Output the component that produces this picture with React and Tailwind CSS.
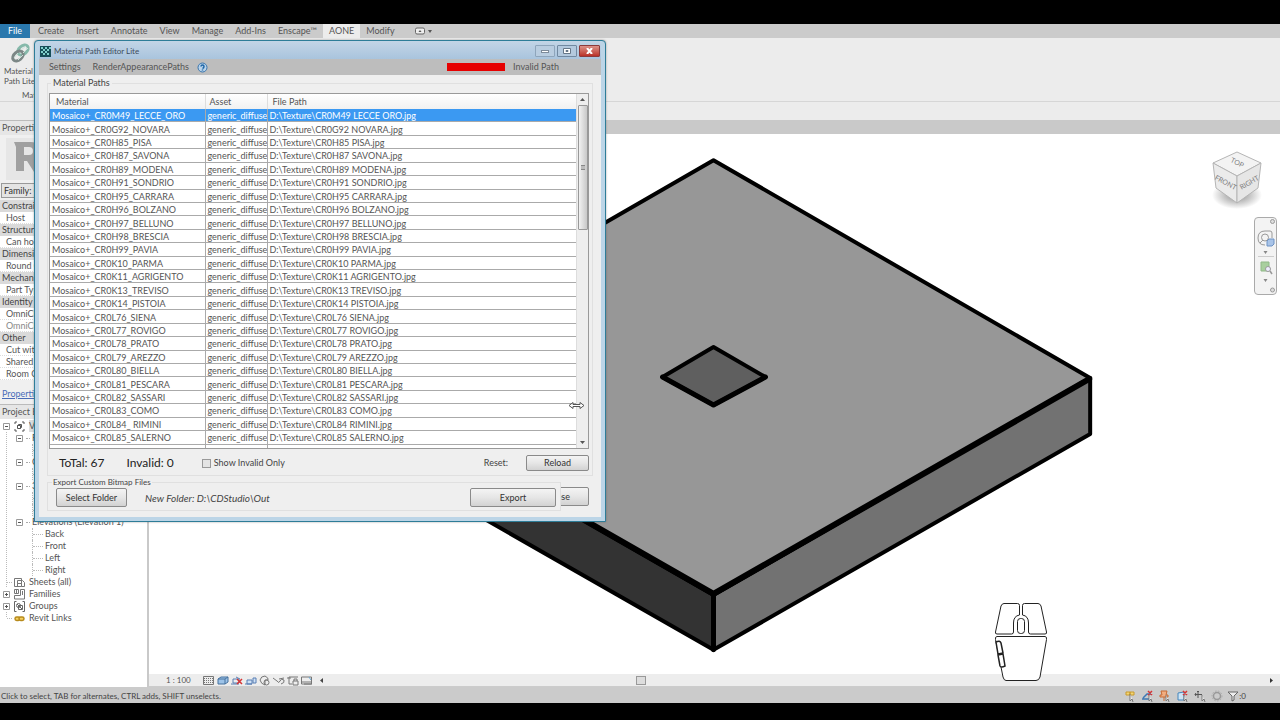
import { ChevronDown } from "lucide-react";

const TABS = ["Create", "Insert", "Annotate", "View", "Manage", "Add-Ins", "Enscape™", "AONE", "Modify"];

const MATERIALS = [
  "CR0M49_LECCE_ORO",
  "CR0G92_NOVARA",
  "CR0H85_PISA",
  "CR0H87_SAVONA",
  "CR0H89_MODENA",
  "CR0H91_SONDRIO",
  "CR0H95_CARRARA",
  "CR0H96_BOLZANO",
  "CR0H97_BELLUNO",
  "CR0H98_BRESCIA",
  "CR0H99_PAVIA",
  "CR0K10_PARMA",
  "CR0K11_AGRIGENTO",
  "CR0K13_TREVISO",
  "CR0K14_PISTOIA",
  "CR0L76_SIENA",
  "CR0L77_ROVIGO",
  "CR0L78_PRATO",
  "CR0L79_AREZZO",
  "CR0L80_BIELLA",
  "CR0L81_PESCARA",
  "CR0L82_SASSARI",
  "CR0L83_COMO",
  "CR0L84_ RIMINI",
  "CR0L85_SALERNO",
  "CR0M44_BOLZANO_ORO",
];

const PROPERTIES = [
  { name: "Constraints", header: true },
  { name: "Host" },
  { name: "Structural", header: true },
  { name: "Can host rebar" },
  { name: "Dimensions", header: true },
  { name: "Round Connector" },
  { name: "Mechanical", header: true },
  { name: "Part Type" },
  { name: "Identity Data", header: true },
  { name: "OmniClass Number" },
  { name: "OmniClass Title", dim: true },
  { name: "Other", header: true },
  { name: "Cut with Voids" },
  { name: "Shared" },
  { name: "Room Calculation" },
];

const TREE = [
  { name: "Views (all)", level: 0, box: "-", icon: "views", selected: true },
  { name: "Floor Plans", level: 1, box: "-" },
  { name: "Ref. Level", level: 2 },
  { name: "Ceiling Plans", level: 1, box: "-" },
  { name: "Ref. Level", level: 2 },
  { name: "3D Views", level: 1, box: "-" },
  { name: "View 1", level: 2 },
  { name: "{3D}", level: 2 },
  { name: "Elevations (Elevation 1)", level: 1, box: "-" },
  { name: "Back", level: 2 },
  { name: "Front", level: 2 },
  { name: "Left", level: 2 },
  { name: "Right", level: 2 },
  { name: "Sheets (all)", level: 0, icon: "sheets" },
  { name: "Families", level: 0, box: "+", icon: "families" },
  { name: "Groups", level: 0, box: "+", icon: "groups" },
  { name: "Revit Links", level: 0, icon: "links", last: true },
];

const BUTTON =
  "flex items-center justify-center rounded-[2px] border border-[#8a8a8a] bg-linear-to-b from-[#f4f4f4] via-[#e6e6e6] to-[#d2d2d2] text-[9px] leading-[12px] text-[#333]";

const TreeIcon = ({ kind }) => {
  switch (kind) {
    case "views":
      return (
        <svg width="11" height="11" viewBox="0 0 11 11" fill="none" stroke="#555">
          <path d="M1 3V1h2M8 1h2v2M10 8v2H8M3 10H1V8" />
          <path d="M3.500 4.500h3v3h-3zM3.500 4.500l1-1h3v3l-1 1" />
        </svg>
      );
    case "sheets":
      return (
        <svg width="11" height="11" viewBox="0 0 11 11" fill="#fff" stroke="#777">
          <path d="M.5 1.500h7v8h-7zM3.500 3.500h5l2 2v4h-7z" />
          <path d="M3.500 6.500h4v3M7.500 3.500v3" />
        </svg>
      );
    case "families":
      return (
        <svg width="11" height="11" viewBox="0 0 11 11" fill="#fff" stroke="#777">
          <path d="M.5.5h4v4h-4zM6.500.5h4v9.500h-10V6.500h6z" />
          <path d="M2.500 1v3M8.500 2v4" />
        </svg>
      );
    case "groups":
      return (
        <svg width="11" height="11" viewBox="0 0 11 11" fill="none" stroke="#666">
          <path d="M2.500.5H.5v10h2M8.500.5h2v10h-2" />
          <circle cx="4.500" cy="4.500" r="2" />
          <path d="M4.500 4.500h4v4h-4zM3 3l5 5" />
        </svg>
      );
    default:
      return (
        <svg width="11" height="11" viewBox="0 0 11 11" fill="#f4d060" stroke="#b78a1c" strokeWidth="1.500">
          <rect x="1" y="4" width="5" height="3.500" rx="1.700" />
          <rect x="5" y="4" width="5" height="3.500" rx="1.700" />
        </svg>
      );
  }
};

const ExpandBox = ({ sign }) => (
  <svg width="7" height="7" viewBox="0 0 7 7" fill="#fff" stroke="#999">
    <path d="M.5.500h6v6h-6z" />
    <path d={sign === "+" ? "M2 3.500h3M3.500 2v3" : "M2 3.500h3"} stroke="#555" />
  </svg>
);

const TreeLine = ({ last, branch }) => (
  <svg width="13" height="12" viewBox="0 0 13 12" fill="none" stroke="#bbb" strokeDasharray="1 1">
    <path d={last ? "M6.500 0v6" : "M6.500 0v12"} />
    {branch && <path d="M7 6.500h6" />}
  </svg>
);

const TreeRow = ({ item }) => (
  <li className="flex h-3 items-center whitespace-nowrap">
    <span className="flex h-full w-[13px] shrink-0 items-center justify-center">
      {item.level === 0 && item.box ? (
        <ExpandBox sign={item.box} />
      ) : (
        <TreeLine last={item.last} branch={item.level === 0} />
      )}
    </span>
    {item.level > 0 && (
      <>
        <span className="flex h-full w-[13px] shrink-0 items-center justify-center">
          {item.box && <ExpandBox sign={item.box} />}
        </span>
        <span className="mr-[2px] flex h-full w-1 shrink-0 items-center">
          {item.box && <span className="w-full border-t border-dotted border-[#aaa]" />}
        </span>
      </>
    )}
    {item.level === 2 && (
      <span className="flex h-full w-[13px] shrink-0 items-center border-l border-dotted border-[#bbb]">
        <span className="w-[10px] border-t border-dotted border-[#bbb]" />
      </span>
    )}
    {item.icon && (
      <span className="mr-1 ml-[1px] shrink-0">
        <TreeIcon kind={item.icon} />
      </span>
    )}
    <span className={item.selected ? "bg-[#dcdcdc]" : ""}>{item.name}</span>
  </li>
);

const RibbonTabs = () => (
  <nav className="flex h-[14px] items-center bg-[#cbcbcb] text-[9px] leading-[12px] text-[#555]">
    <button className="flex h-full w-[30px] items-center justify-center bg-[#2a78ad] text-white">File</button>
    <div className="ml-[2px] flex h-full items-center">
      {TABS.map((tab) => (
        <button
          key={tab}
          className={`flex h-full items-center px-[6px] ${tab === "AONE" ? "bg-[#ececec]" : ""}`}
        >
          {tab}
        </button>
      ))}
    </div>
    <button aria-label="Ribbon options" className="ml-[14px]">
      <svg width="18" height="8" viewBox="0 0 18 8" fill="none" stroke="#666">
        <rect x=".5" y="1" width="9" height="6" rx="1.500" fill="#eee" />
        <path d="M3.500 5h3L5 3z" fill="#555" stroke="none" />
        <path d="M13 3h4l-2 3z" fill="#555" stroke="none" />
      </svg>
    </button>
  </nav>
);

const Ribbon = () => (
  <div className="h-[82px] bg-[#ececec] text-[8px] leading-[10px] text-[#555]">
    <div className="flex h-16 border-b border-[#d6d6d6] pt-1">
      <div className="flex w-20 flex-col pl-1">
        <button className="flex flex-col items-start text-left">
          <svg className="ml-[6px]" width="22" height="23" viewBox="0 0 22 23" fill="none">
            <ellipse cx="13" cy="8" rx="6" ry="4" transform="rotate(-40 13 8)" stroke="#86b9aa" strokeWidth="3" />
            <ellipse cx="8" cy="14" rx="6" ry="4" transform="rotate(-40 8 14)" stroke="#7c8786" strokeWidth="3" />
            <path d="M4 16l4-5M8 18l5-5M11 8l5-4M13 11l5-5" stroke="#cfe2dc" />
          </svg>
          <span className="mt-[1px]">Material</span>
          <span>Path Lite</span>
        </button>
        <span className="mt-1 ml-[18px]">Material</span>
      </div>
    </div>
  </div>
);

const Sidebar = () => (
  <aside className="-mt-[14px] flex w-[149px] shrink-0 flex-col overflow-hidden border-r-2 border-[#c9c9c9] bg-[#f0f0f0] text-[9px] leading-[12px] text-[#555]">
    <h2 className="h-[15px] border-t border-[#bbb] bg-[#e6e6e6] pt-[1px] pl-[2px]">Properties</h2>
    <div className="flex h-12 items-center pl-[6px]">
      <svg width="44" height="42" viewBox="0 0 44 42">
        <rect width="44" height="42" fill="#e6e6e6" />
        <path
          fill="#a0a0a0"
          fillRule="evenodd"
          d="M8 4h17q10 0 10 9q0 7-6 9l8 12h-9l-7-11h-3v10h-8V9zM18 9v8h5q4 0 4-4t-4-4z"
        />
      </svg>
    </div>
    <button className="mx-[1px] flex h-[15px] items-center justify-between border border-[#999] bg-[#e4e4e4] px-[2px] text-[#333]">
      Family: Generic Models
      <ChevronDown size={8} />
    </button>
    <ul className="mt-[2px] bg-white">
      {PROPERTIES.map((item) => (
        <li
          key={item.name}
          className={`h-3 whitespace-nowrap ${
            item.header
              ? "bg-[#dadada] pl-[2px] text-[#444]"
              : `border-b border-dotted border-[#ddd] pl-[6px] ${item.dim ? "text-[#888]" : ""}`
          }`}
        >
          {item.name}
        </li>
      ))}
    </ul>
    <a href="#help" className="mt-2 ml-[2px] text-[#4a6cb8] underline">
      Properties help
    </a>
    <h2 className="mt-1 h-[15px] border-t border-[#bbb] bg-[#e6e6e6] pt-[1px] pl-[2px]">Project Browser</h2>
    <ul className="flex-1 bg-white pt-[1px]">
      {TREE.map((item, index) => (
        <TreeRow key={index} item={item} />
      ))}
    </ul>
  </aside>
);

const Model = () => (
  <svg className="h-full w-full" viewBox="148 134 1132 540" stroke="#000" strokeLinejoin="round" strokeLinecap="round">
    <path d="M335 378L713 595V650L335 434z" fill="#333" strokeWidth="4" />
    <path d="M713 595L1090 378V434L713 650z" fill="#727272" strokeWidth="4" />
    <path d="M713 160L1090 378L713 595L335 378z" fill="#979797" strokeWidth="4" />
    <path d="M335 378L713 594L1089 379" fill="none" strokeWidth="6" />
    <path d="M713 595V650" strokeWidth="5" />
    <path d="M713 347L765 377L713 405L662 377z" fill="#5f5f5f" strokeWidth="4" />
    <path d="M662 377L713 405L765 377" fill="none" strokeWidth="5" />
  </svg>
);

const ViewCube = () => (
  <svg width="56" height="66" viewBox="0 0 56 66" fontFamily="Lato, sans-serif" fontSize="7" fill="#808080">
    <defs>
      <radialGradient id="cubeShadow">
        <stop offset="0" stopColor="#888" />
        <stop offset="1" stopColor="#fff" />
      </radialGradient>
    </defs>
    <ellipse cx="28" cy="47" rx="25" ry="14" fill="url(#cubeShadow)" />
    <g stroke="#b5b5b5" strokeLinejoin="round">
      <path d="M28 4L52 15L28 28L4 15z" fill="#f3f3f3" />
      <path d="M4 15L28 28V55L7 40z" fill="#ebebeb" />
      <path d="M52 15L28 28V55L49 40z" fill="#e6e6e6" />
    </g>
    <text x="28" y="17" textAnchor="middle" transform="rotate(26 28 15)">TOP</text>
    <text x="17" y="37" textAnchor="middle" transform="rotate(28 17 34)">FRONT</text>
    <text x="40" y="37" textAnchor="middle" transform="rotate(-30 40 34)">RIGHT</text>
  </svg>
);

const NavigationBar = () => (
  <div className="flex h-[78px] w-[23px] flex-col items-center rounded-[4px] border border-[#aaa] bg-[#f3f3f3]">
    <svg width="21" height="76" viewBox="0 0 21 76" fill="none" stroke="#999">
      <circle cx="17.500" cy="3.500" r="2" fill="#ddd" />
      <path d="M10 13h5q2 0 2 2v5M10 27q-7 0-7-7t7-7" />
      <circle cx="10" cy="19.500" r="3.500" />
      <path d="M5 25l3-3" />
      <path d="M12 23l2-2h5v5l-2 2h-5z" fill="#a9c4e8" stroke="#6e93c4" />
      <path d="M8.500 33h4l-2 3zM8.500 61h4l-2 3z" fill="#888" stroke="none" />
      <path d="M3 38.500h16" stroke="#ccc" />
      <path d="M6 44h8v9H6z" fill="#a8cf9e" stroke="#8fb887" />
      <circle cx="13" cy="51" r="2.500" fill="#eef" />
      <path d="M15 53l2 3" strokeWidth="1.500" />
      <circle cx="17.500" cy="72" r="2" fill="#ddd" />
    </svg>
  </div>
);

const MouseOverlay = () => (
  <svg width="54" height="80" viewBox="0 0 54 80" fill="#fff" stroke="#222">
    <path d="M10 1.500h13.500q2 0 2 2v9.500q-6 1-6 8v9q0 2-2 2H3q-2 0-1.500-2L7 4q1-2.500 3-2.500z" />
    <path d="M44 1.500H30.500q-2 0-2 2v9.500q6 1 6 8v9q0 2 2 2H51q2 0 1.500-2L47 4q-1-2.500-3-2.500z" />
    <rect x="23.500" y="16.500" width="7" height="15" rx="3" />
    <path d="M3 34.500h48q2 0 1.500 3L46 75q-1 3.500-4 3.500H12q-2 0-3-3.500L1.500 37.500q-.5-3 1.500-3z" />
    <path d="M2 40q4-2 5 1l2 10-5 1zM4 53l5-1 2 12q-4 2-5 0z" strokeWidth="1.500" />
  </svg>
);

const ViewControlBar = () => (
  <div className="flex h-[13px] items-center border-b border-[#ccc] bg-[#ededed] pl-[17px] text-[8px] leading-[12px] text-[#555]">
    <span className="w-[37px]">1 : 100</span>
    <svg width="122" height="11" viewBox="0 0 122 11" fill="none" stroke="#777">
      <path d="M.5 1.500h10v8H.5z" />
      <path d="M1 3.500h9M1 5.500h9M1 7.500h9" strokeDasharray="1 1" />
      <path d="M15 4l3-2h7v5l-3 2h-7z" fill="#9dc3e8" stroke="#47729f" />
      <path d="M15 4h7l3-2M22 4v5" stroke="#47729f" />
      <path d="M30 4h6v4h-6zM28 9h8M33 2l4 2" stroke="#597fb4" />
      <path d="M34 4l5 5M39 4l-5 5" stroke="#d63434" strokeWidth="1.500" />
      <path d="M44 5h5v4h-5zM42 9h7M50 3h3v5h-3z" stroke="#597fb4" fill="#cfe1f5" />
      <path d="M57 5q1-4 5-4 4 2 3 4h-3v5q-4-1-5-5z" />
      <circle cx="63.500" cy="7.500" r="2.500" />
      <path d="M70 3l4 3q2 3 3 0t4-1q1 3-3 4M76 4l5-1" />
      <path d="M86 9V2h9M84 3h4M86 9h3M90 6h5v4h-5zM91 6V4h3v2" />
      <path d="M98.500 2h10v7h-10zM98 7h10M101 9h8" />
      <path d="M106 2l2 3" stroke="#6aa5cf" />
      <path d="M117 5.500l3-2.500v5z" fill="#444" stroke="none" />
    </svg>
    <svg className="mr-[6px] ml-auto" width="5" height="7" viewBox="0 0 5 7">
      <path d="M1 1l3 2.500L1 6z" fill="#333" />
    </svg>
  </div>
);

const Viewport = () => (
  <main className="flex min-w-0 flex-1 flex-col bg-white">
    <div className="relative flex-1">
      <div className="absolute inset-0">
        <Model />
      </div>
      <div className="absolute top-[14px] right-[15px]">
        <ViewCube />
      </div>
      <div className="absolute top-[83px] right-[3px]">
        <NavigationBar />
      </div>
      <div className="absolute right-[232px] -bottom-2 z-10">
        <MouseOverlay />
      </div>
      <span className="absolute -bottom-[11px] left-[487px] z-10 h-[9px] w-[10px] border border-[#999] bg-[#ddd]" />
    </div>
    <ViewControlBar />
  </main>
);

const StatusBar = () => (
  <footer className="flex h-4 items-center justify-between bg-[#cbcbcb] pt-[1px] pr-[34px] pl-[1px] text-[8px] leading-[12px] text-[#444]">
    <span>Click to select, TAB for alternates, CTRL adds, SHIFT unselects.</span>
    <div className="flex items-center">
      <svg width="114" height="12" viewBox="0 0 114 12" fill="none" stroke="#666">
        <path d="M1 2h4v3H1zM5 2h4v3H5z" stroke="#c99a2a" fill="#f1d576" />
        <path d="M18 8l4-4h4M17 9h8" stroke="#3d78b5" strokeWidth="1.500" />
        <path d="M36 1h6l-1 4h2v2h-8V5h2zM39 7v4" stroke="#c76a35" fill="#f1ae82" />
        <path d="M53 3l6-1v8h-6z" stroke="#4486bd" fill="#cde4f5" />
        <path d="M73 1v7M70 4.500h7M72 2l1-1 1 1M71 3l-1 1.500 1 1.500" stroke="#555" />
        <path
          d="M5 4v7l2-2 1 3M24 5v6l2-2 1 3M41 5v6l2-2 1 3M59 5v6l2-2 1 3M77 5v6l2-2 1 3"
          fill="#fff"
          stroke="#777"
        />
        <path d="M23 1l4 4M27 1l-4 4M58 1l4 4M62 1l-4 4" stroke="#d63434" strokeWidth="1.500" />
        <circle cx="92" cy="6" r="3.500" stroke="#999" strokeWidth="1.500" />
        <circle cx="92" cy="6" r="5" stroke="#aaa" strokeDasharray="1.500 1.500" />
        <path d="M103 2h10l-4 4v4l-2 1V6z" fill="#eee" />
      </svg>
      <span>:0</span>
    </div>
  </footer>
);

const TitleBar = () => (
  <div className="flex h-[18px] items-center bg-linear-to-b from-[#c3d5e6] to-[#a9c4dd] pt-[2px] pl-[1px] text-[8px] leading-[12px] text-[#3c4c5c]">
    <svg className="mr-[3px]" width="11" height="11" viewBox="0 0 11 11">
      <path d="M0 0h11v11H0z" fill="#174e59" />
      <path
        d="M1 1h2v2H1zM5 1h2v2H5zM3 3h2v2H3zM7 3h2v2H7zM1 5h2v2H1zM5 5h2v2H5zM3 7h2v2H3zM7 7h2v2H7zM9 1h2v2H9z"
        fill="#80d1cd"
      />
    </svg>
    <span className="flex-1">Material Path Editor Lite</span>
    <div className="flex gap-[2px] pr-[1px]">
      <button
        aria-label="Minimize"
        className="flex h-3 w-5 items-center justify-center rounded-[1px] border border-[#8ea5bb] bg-[#b9cde0]"
      >
        <span className="h-[3px] w-2 border border-[#7d8b9a] bg-white" />
      </button>
      <button
        aria-label="Maximize"
        className="flex h-3 w-5 items-center justify-center rounded-[1px] border border-[#7189a1] bg-[#b3c9de]"
      >
        <svg width="8" height="6" viewBox="0 0 8 6" fill="#fff" stroke="#667788">
          <path d="M.5.500h7v5h-7z" />
          <path d="M3 2.500h2v1H3z" />
        </svg>
      </button>
      <button
        aria-label="Close window"
        className="flex h-3 w-[21px] items-center justify-center rounded-[1px] border border-[#8c3b3b] bg-linear-to-b from-[#dc9189] to-[#b92f27]"
      >
        <svg width="7" height="6" viewBox="0 0 7 6" stroke="#fff" strokeWidth="2">
          <path d="M1 0l5 6M6 0L1 6" />
        </svg>
      </button>
    </div>
  </div>
);

const MaterialTable = () => (
  <div className="flex h-[356px] overflow-hidden border border-[#999] bg-white">
    <div className="min-w-0 flex-1 overflow-hidden">
      <table className="h-[364px] w-full table-fixed border-collapse text-left text-[9px] leading-[11px] text-[#555]">
        <colgroup>
          <col className="w-[155px]" />
          <col className="w-[62px]" />
          <col />
        </colgroup>
        <thead>
          <tr className="h-[15px] bg-linear-to-b from-white to-[#f1f1f1]">
            <th className="border-r border-[#ddd] py-0 pl-[6px] font-normal">Material</th>
            <th className="border-r border-[#ddd] py-0 pl-1 font-normal">Asset</th>
            <th className="py-0 pl-[5px] font-normal">File Path</th>
          </tr>
        </thead>
        <tbody>
          {MATERIALS.map((name, index) => (
            <tr key={name} className={index === 0 ? "bg-[#3b99f2] text-white" : ""}>
              <td className="overflow-hidden border-r border-b border-[#aaa] pt-[1px] pr-0 pb-0 pl-[2px] whitespace-nowrap">
                Mosaico+_{name}
              </td>
              <td className="overflow-hidden border-r border-b border-[#aaa] pt-[1px] pr-0 pb-0 pl-[2px] whitespace-nowrap">
                generic_diffuse
              </td>
              <td className="border-b border-[#aaa] pt-[1px] pr-0 pb-0 pl-[2px] whitespace-nowrap">
                {`D:\\Texture\\${name.replace("_ ", " ").replaceAll("_", " ")}.jpg`}
              </td>
            </tr>
          ))}
        </tbody>
      </table>
    </div>
    <div className="flex w-3 flex-col items-center border-l border-[#ddd] bg-[#eee]">
      <svg className="my-[3px]" width="5" height="5" viewBox="0 0 5 5">
        <path d="M0 4h5L2.500 1z" fill="#555" />
      </svg>
      <div className="flex h-[125px] w-[10px] items-center justify-center rounded-[1px] border border-[#999] bg-linear-to-r from-[#f2f2f2] to-[#c8c8c8]">
        <span className="h-[5px] w-1 border-y border-[#888] bg-[#bbb]" />
      </div>
      <svg className="mt-auto mb-[3px]" width="5" height="5" viewBox="0 0 5 5">
        <path d="M0 1h5L2.500 4z" fill="#555" />
      </svg>
    </div>
  </div>
);

const EditorDialog = () => (
  <section className="absolute top-10 left-[34px] z-20 w-[572px] rounded-t-[4px] border border-[#2e7d98] bg-[#bcd5e7] px-1 pb-1 shadow-[0_0_2px_#4448]">
    <TitleBar />
    <div className="flex h-4 items-center bg-[#bdbdbd] pl-[10px] text-[9px] leading-[12px] text-[#555]">
      <button>Settings</button>
      <button className="ml-3">RenderAppearancePaths</button>
      <button aria-label="Help" className="ml-2">
        <svg width="11" height="11" viewBox="0 0 11 11" fill="none">
          <circle cx="5.500" cy="5.500" r="4.500" fill="#b9d3ea" stroke="#3975ad" />
          <path d="M4 4.500q0-1.500 1.500-1.500T7 4.500t-1.500 2M5.500 7.500v1" stroke="#1d65a6" strokeWidth="1.500" />
        </svg>
      </button>
      <span className="ml-auto h-2 w-[58px] bg-[#e60000]" />
      <span className="mr-[42px] ml-2">Invalid Path</span>
    </div>
    <div className="bg-[#efefef] px-2 pt-[2px] pb-[6px] text-[9px] leading-[12px] text-[#444]">
      <fieldset className="border border-[#e0e0e0] pr-[3px] pb-1 pl-[1px]">
        <legend className="ml-[2px] px-[2px]">Material Paths</legend>
        <div className="mt-1">
          <MaterialTable />
        </div>
        <div className="mt-[6px] flex items-center pl-[10px]">
          <span className="text-[12px] leading-[16px] text-[#222]">ToTal: 67</span>
          <span className="ml-[22px] text-[12px] leading-[16px] text-[#222]">Invalid: 0</span>
          <label className="ml-[28px] flex items-center gap-[3px]">
            <input type="checkbox" className="size-[9px] appearance-none border border-[#999] bg-[#e4e4e4]" />
            Show Invalid Only
          </label>
          <span className="ml-auto">Reset:</span>
          <button className={`ml-[18px] h-4 w-[63px] ${BUTTON}`}>Reload</button>
        </div>
      </fieldset>
      <div className="flex items-center pr-1">
        <fieldset className="min-w-0 flex-1 border border-[#e0e0e0] px-[4px] pb-[3px]">
          <legend className="px-[1px] text-[8px]">Export Custom Bitmap Files</legend>
          <div className="flex items-center pl-1">
            <button className={`h-[19px] w-[71px] ${BUTTON}`}>Select Folder</button>
            <em className="ml-[18px] text-[10px]">New Folder: D:\CDStudio\Out</em>
            <button className={`ml-auto h-[19px] w-[86px] ${BUTTON}`}>Export</button>
          </div>
        </fieldset>
        <div className="flex w-7 justify-end overflow-hidden pt-[6px]">
          <button className={`h-[19px] w-[60px] shrink-0 ${BUTTON}`}>Close</button>
        </div>
      </div>
    </div>
    <svg className="absolute top-[360px] left-[533px]" width="17" height="9" viewBox="0 0 17 9" fill="#fff" stroke="#555">
      <path d="M1 4.500L5 1.500v2h7v-2l4 3-4 3v-2H5v2z" />
    </svg>
  </section>
);

export default function App() {
  return (
    <div className="relative flex min-h-screen flex-col overflow-hidden bg-black font-[Lato,sans-serif]">
      <div className="h-6 bg-black" />
      <RibbonTabs />
      <Ribbon />
      <div className="h-[14px] bg-[#c9c9c9]" />
      <div className="flex flex-1">
        <Sidebar />
        <Viewport />
      </div>
      <StatusBar />
      <div className="h-[17px] bg-black" />
      <EditorDialog />
    </div>
  );
}
